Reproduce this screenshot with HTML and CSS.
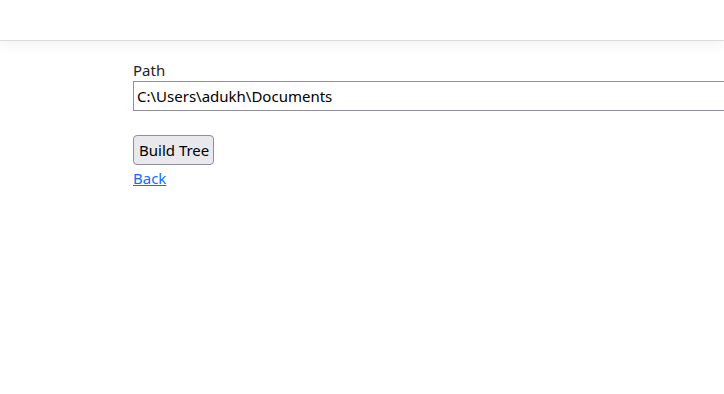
FILE: index.html
```html
<!DOCTYPE html>
<html lang="en">
<head>
    <meta charset="UTF-8">
    <meta name="viewport" content="width=device-width, initial-scale=1.0">
    <title>Build Tree</title>
    <link rel="stylesheet" href="styles.css">
</head>
<body>
    <!-- barra in alto -->
    <header class="topbar"></header>
    <div class="contenuto">
        <form class="modulo">
            <label for="path" class="etichetta">Path</label>
            <input type="text" id="path" class="campo" value="C:\Users\adukh\Documents">
            <button type="button" class="tasto">Build Tree</button>
        </form>
        <a href="#" class="link">Back</a>
    </div>
</body>
</html>
```

FILE: styles.css
```css
:root{
    --text-color: #212529;
    --link-color: #0d6efd;
    --border-color: #8f8f9d;
    --button-bg: #e9e9ed;
}
body {
    margin: 0;
    font-family: "Noto Sans", "Open Sans", sans-serif;
    font-size: 15px;
    line-height: 1.5;
    color: var(--text-color);
    background-color: #ffffff;
}
.topbar{
    height: 40px;
    border-bottom: 1px solid #dcdcdc;
    box-shadow: 0 4px 12px rgba(0,0,0,.05);
    background-color: #ffffff;
}
.contenuto{
    padding-top: 18px;
    padding-left: 133px;
}
.modulo{
    display: flex;
    flex-direction: column;
    align-items: flex-start;
}
.etichetta{
    line-height: 22px;
}
.campo{
    width: 620px;
    height: 30px;
    box-sizing: border-box;
    font-family: inherit;
    font-size: 15px;
    color: #000000;
    padding: 0 3px;
    border: 1px solid var(--border-color);
    border-radius: 0;
    margin: 0;
}
.tasto{
    margin-top: 24px;
    height: 30px;
    padding: 0 4px 0 5px;
    font-family: inherit;
    font-size: 15px;
    color: #000000;
    background-color: var(--button-bg);
    border: 1px solid var(--border-color);
    border-radius: 4px;
}
.link{
    display: inline-block;
    margin-top: 2px;
    color: var(--link-color);
    line-height: 22px;
}
```
